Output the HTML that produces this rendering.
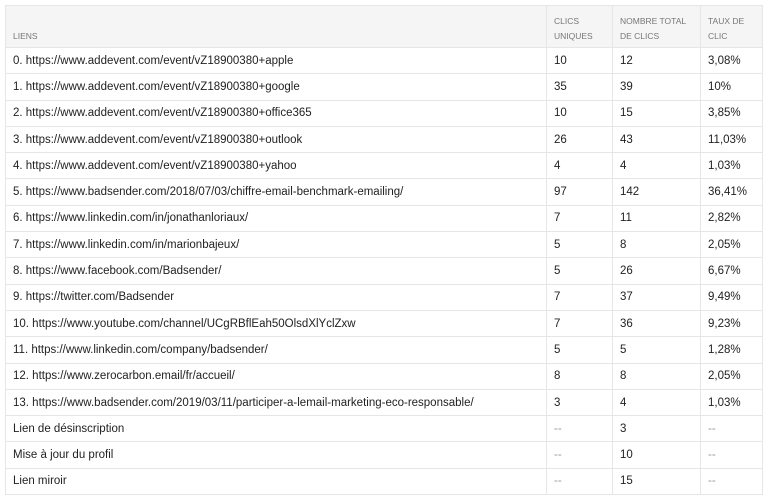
<!DOCTYPE html><html><head><style>
body{margin:0;background:#fff;font-family:"Liberation Sans",sans-serif;}
table{position:absolute;left:5px;top:5px;width:757px;border-collapse:collapse;table-layout:fixed;}
td,th{border:1px solid #e6e6e6;font-size:11.5px;color:#222;padding:0 0 0 7px;height:25.3px;text-align:left;white-space:nowrap;overflow:hidden}
th{background:#f5f5f5;color:#777;font-weight:normal;font-size:8.5px;height:41px;line-height:15px;vertical-align:bottom;padding-bottom:3px;box-sizing:border-box}
tr:first-child{height:42px}
.d{color:#999}
</style></head><body>
<table>
<colgroup><col style="width:541px"><col style="width:66px"><col style="width:88px"><col style="width:62px"></colgroup>
<tr><th>LIENS</th><th>CLICS<br>UNIQUES</th><th>NOMBRE TOTAL<br>DE CLICS</th><th>TAUX DE<br>CLIC</th></tr>
<tr><td>0. https://www.addevent.com/event/vZ18900380+apple</td><td>10</td><td>12</td><td>3,08%</td></tr>
<tr><td>1. https://www.addevent.com/event/vZ18900380+google</td><td>35</td><td>39</td><td>10%</td></tr>
<tr><td>2. https://www.addevent.com/event/vZ18900380+office365</td><td>10</td><td>15</td><td>3,85%</td></tr>
<tr><td>3. https://www.addevent.com/event/vZ18900380+outlook</td><td>26</td><td>43</td><td>11,03%</td></tr>
<tr><td>4. https://www.addevent.com/event/vZ18900380+yahoo</td><td>4</td><td>4</td><td>1,03%</td></tr>
<tr><td>5. https://www.badsender.com/2018/07/03/chiffre-email-benchmark-emailing/</td><td>97</td><td>142</td><td>36,41%</td></tr>
<tr><td>6. https://www.linkedin.com/in/jonathanloriaux/</td><td>7</td><td>11</td><td>2,82%</td></tr>
<tr><td>7. https://www.linkedin.com/in/marionbajeux/</td><td>5</td><td>8</td><td>2,05%</td></tr>
<tr><td>8. https://www.facebook.com/Badsender/</td><td>5</td><td>26</td><td>6,67%</td></tr>
<tr><td>9. https://twitter.com/Badsender</td><td>7</td><td>37</td><td>9,49%</td></tr>
<tr><td>10. https://www.youtube.com/channel/UCgRBflEah50OlsdXlYclZxw</td><td>7</td><td>36</td><td>9,23%</td></tr>
<tr><td>11. https://www.linkedin.com/company/badsender/</td><td>5</td><td>5</td><td>1,28%</td></tr>
<tr><td>12. https://www.zerocarbon.email/fr/accueil/</td><td>8</td><td>8</td><td>2,05%</td></tr>
<tr><td>13. https://www.badsender.com/2019/03/11/participer-a-lemail-marketing-eco-responsable/</td><td>3</td><td>4</td><td>1,03%</td></tr>
<tr><td>Lien de désinscription</td><td class="d">--</td><td>3</td><td class="d">--</td></tr>
<tr><td>Mise à jour du profil</td><td class="d">--</td><td>10</td><td class="d">--</td></tr>
<tr><td>Lien miroir</td><td class="d">--</td><td>15</td><td class="d">--</td></tr>
</table>
</body></html>
